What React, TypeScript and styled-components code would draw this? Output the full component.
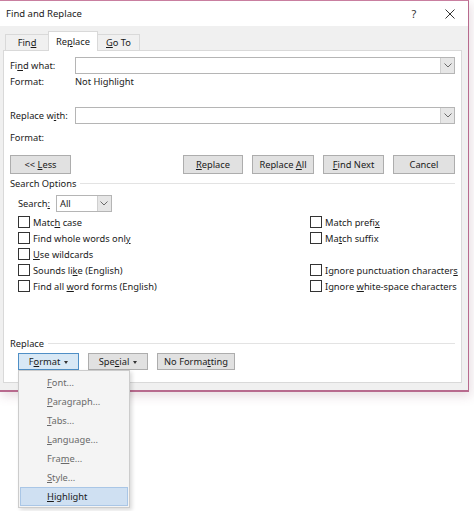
import React from "react";
import styled, { createGlobalStyle, css } from "styled-components";

const Global = createGlobalStyle`
  html, body { margin: 0; padding: 0; background: #ffffff; min-height: 511px; }
  body { font-family: "Noto Sans", "Open Sans", sans-serif; font-size: 9.3px; color: #1a1a1a; }
  * { box-sizing: border-box; }
`;

const Window = styled.div`
  position: relative;
  margin-left: -1px;
  width: 470px;
  height: 392px;
  background: #f0f0f0;
  border: 1px solid #c97fa0;
  border-bottom: 2px solid #b86a8e;
  border-right: 1px solid #b86a8e;
  box-shadow: 2px 4px 10px rgba(120, 60, 90, 0.18);
  display: flex;
  flex-direction: column;
`;

const TitleBar = styled.div`
  height: 25px;
  background: #ffffff;
  display: flex;
  align-items: center;
  padding-left: 6px;
  font-size: 9.5px;
`;

const Title = styled.div`
  flex: 1;
`;

const TitleButton = styled.div<{ $w: number }>`
  width: ${(p) => p.$w}px;
  display: flex;
  justify-content: center;
  font-size: 11px;
  color: #333;
`;

const TabStrip = styled.div`
  height: 24px;
  display: flex;
  align-items: flex-end;
  padding-left: 5px;
`;

const Tab = styled.div<{ $active?: boolean; $w: number }>`
  width: ${(p) => p.$w}px;
  height: 16px;
  border: 1px solid #d9d9d9;
  border-bottom: none;
  background: #f0f0f0;
  display: flex;
  align-items: center;
  justify-content: center;
  margin-right: -1px;
  ${(p) =>
    p.$active &&
    css`
      background: #ffffff;
      position: relative;
      z-index: 1;
      margin-bottom: -1px;
      height: 20px;
    `}
`;

const Panel = styled.div`
  margin-left: 3px;
  width: 459px;
  height: 333px;
  background: #ffffff;
  border: 1px solid #d9d9d9;
  padding: 6px 6px 0 6px;
  display: flex;
  flex-direction: column;
`;

const FieldRow = styled.div`
  height: 17px;
  display: flex;
  align-items: center;
`;

const FieldLabel = styled.div`
  width: 65px;
`;

const InfoRow = styled.div<{ $h: number; $mb?: number }>`
  height: ${(p) => p.$h}px;
  margin-bottom: ${(p) => p.$mb || 0}px;
  display: flex;
  align-items: center;
`;

const Combo = styled.div<{ $w?: number }>`
  ${(p) => (p.$w ? `width: ${p.$w}px;` : "flex: 1;")}
  height: 17px;
  border: 1px solid #b5b5b5;
  background: #fff;
  display: flex;
  align-items: stretch;
`;

const ComboText = styled.div`
  flex: 1;
  display: flex;
  align-items: center;
  padding-left: 3px;
`;

const ComboArrow = styled.div`
  width: 14px;
  background: #e6e6e6;
  border-left: 1px solid #cfcfcf;
  display: flex;
  align-items: center;
  justify-content: center;
`;

const ButtonRow = styled.div`
  height: 19px;
  margin-top: 5px;
  display: flex;
  gap: 9px;
`;

const Button = styled.div<{ $w: number; $primary?: boolean }>`
  width: ${(p) => p.$w}px;
  height: 100%;
  border: 1px solid #adadad;
  background: #e1e1e1;
  display: flex;
  align-items: center;
  justify-content: center;
  white-space: pre;
  ${(p) =>
    p.$primary &&
    css`
      background: #d8e8f5;
      border-color: #4f8fc6;
    `}
`;

const Spacer = styled.div`
  flex: 1;
`;

const GroupHeader = styled.div<{ $mt: number }>`
  margin-top: ${(p) => p.$mt}px;
  height: 14px;
  display: flex;
  align-items: center;
  gap: 4px;
  &::after {
    content: "";
    flex: 1;
    height: 1px;
    background: #e3e3e3;
  }
`;

const SearchRow = styled.div`
  margin-top: 5px;
  padding-left: 8px;
  height: 16px;
  display: flex;
  align-items: center;
  gap: 6px;
`;

const OptionGrid = styled.div`
  margin-top: 3px;
  padding-left: 8px;
  display: grid;
  grid-template-columns: 292px auto;
  grid-auto-rows: 16px;
`;

const Option = styled.label<{ $col: number; $row: number }>`
  grid-column: ${(p) => p.$col};
  grid-row: ${(p) => p.$row};
  display: flex;
  align-items: center;
  gap: 3px;
  white-space: nowrap;
`;

const Box = styled.span`
  width: 12px;
  height: 12px;
  border: 1px solid #333;
  background: #fff;
`;

const ReplaceButtons = styled.div`
  margin-top: 3px;
  height: 17px;
  padding-left: 8px;
  display: flex;
  gap: 9px;
`;

const MenuAnchor = styled.div`
  position: relative;
  width: 61px;
  height: 100%;
`;

const Menu = styled.div`
  position: absolute;
  left: 0;
  top: 17px;
  width: 112px;
  background: #f4f4f4;
  border: 1px solid #cccccc;
  box-shadow: 2px 2px 4px rgba(0, 0, 0, 0.15);
  padding: 2px 1px 1px 1px;
  z-index: 5;
`;

const MenuItem = styled.div<{ $active?: boolean }>`
  height: 19px;
  display: flex;
  align-items: center;
  padding-left: 27px;
  color: #6a6a6a;
  ${(p) =>
    p.$active &&
    css`
      background: #cfe0f2;
      border: 1px solid #a9c6e6;
      color: #1a1a1a;
      padding-left: 26px;
    `}
`;

const Caret = styled.span`
  display: inline-block;
  margin-left: 4px;
  width: 0;
  height: 0;
  border-left: 2.5px solid transparent;
  border-right: 2.5px solid transparent;
  border-top: 3px solid #333;
  vertical-align: middle;
`;

const Chevron = () => (
  <svg width="8" height="5" viewBox="0 0 8 5">
    <path d="M0.5 0.5 L4 4 L7.5 0.5" fill="none" stroke="#6a6a6a" strokeWidth="1" />
  </svg>
);

const K = styled.u`
  text-underline-offset: 1px;
`;

export default function App() {
  return (
    <>
      <Global />
      <Window>
        <TitleBar>
          <Title>Find and Replace</Title>
          <TitleButton $w={20}>?</TitleButton>
          <TitleButton $w={24} style={{ marginLeft: 14, marginRight: 6 }}>
            <svg width="10" height="10" viewBox="0 0 10 10">
              <path d="M0.5 0.5 L9.5 9.5 M9.5 0.5 L0.5 9.5" stroke="#333" strokeWidth="1" />
            </svg>
          </TitleButton>
        </TitleBar>
        <TabStrip>
          <Tab $w={44}>
            <span>
              Fin<K>d</K>
            </span>
          </Tab>
          <Tab $w={50} $active>
            <span>
              Re<K>p</K>lace
            </span>
          </Tab>
          <Tab $w={43}>
            <span>
              <K>G</K>o To
            </span>
          </Tab>
        </TabStrip>
        <Panel>
          <FieldRow>
            <FieldLabel>
              Fi<K>n</K>d what:
            </FieldLabel>
            <Combo>
              <ComboText />
              <ComboArrow>
                <Chevron />
              </ComboArrow>
            </Combo>
          </FieldRow>
          <InfoRow $h={15} $mb={18}>
            <FieldLabel>Format:</FieldLabel>
            <div>Not Highlight</div>
          </InfoRow>
          <FieldRow>
            <FieldLabel>
              Replace w<K>i</K>th:
            </FieldLabel>
            <Combo>
              <ComboText />
              <ComboArrow>
                <Chevron />
              </ComboArrow>
            </Combo>
          </FieldRow>
          <InfoRow $h={26}>
            <FieldLabel>Format:</FieldLabel>
          </InfoRow>
          <ButtonRow>
            <Button $w={61}>
              <span>
                &lt;&lt; <K>L</K>ess
              </span>
            </Button>
            <Spacer />
            <Button $w={60}>
              <span>
                <K>R</K>eplace
              </span>
            </Button>
            <Button $w={62}>
              <span>
                Replace <K>A</K>ll
              </span>
            </Button>
            <Button $w={61}>
              <span>
                <K>F</K>ind Next
              </span>
            </Button>
            <Button $w={62}>
              <span>Cancel</span>
            </Button>
          </ButtonRow>
          <GroupHeader $mt={2}>Search Options</GroupHeader>
          <SearchRow>
            <span>
              Search<K>:</K>
            </span>
            <Combo $w={56}>
              <ComboText>All</ComboText>
              <ComboArrow>
                <Chevron />
              </ComboArrow>
            </Combo>
          </SearchRow>
          <OptionGrid>
            <Option $col={1} $row={1}>
              <Box />
              <span>
                Matc<K>h</K> case
              </span>
            </Option>
            <Option $col={1} $row={2}>
              <Box />
              <span>
                Find whole words onl<K>y</K>
              </span>
            </Option>
            <Option $col={1} $row={3}>
              <Box />
              <span>
                <K>U</K>se wildcards
              </span>
            </Option>
            <Option $col={1} $row={4}>
              <Box />
              <span>
                Sounds li<K>k</K>e (English)
              </span>
            </Option>
            <Option $col={1} $row={5}>
              <Box />
              <span>
                Find all <K>w</K>ord forms (English)
              </span>
            </Option>
            <Option $col={2} $row={1}>
              <Box />
              <span>
                Match prefi<K>x</K>
              </span>
            </Option>
            <Option $col={2} $row={2}>
              <Box />
              <span>
                Ma<K>t</K>ch suffix
              </span>
            </Option>
            <Option $col={2} $row={4}>
              <Box />
              <span>
                Ignore punctuation character<K>s</K>
              </span>
            </Option>
            <Option $col={2} $row={5}>
              <Box />
              <span>
                Ignore <K>w</K>hite-space characters
              </span>
            </Option>
          </OptionGrid>
          <GroupHeader $mt={42}>Replace</GroupHeader>
          <ReplaceButtons>
            <MenuAnchor>
              <Button $w={61} $primary>
                <span>
                  F<K>o</K>rmat
                  <Caret />
                </span>
              </Button>
              <Menu>
                <MenuItem>
                  <span>
                    <K>F</K>ont...
                  </span>
                </MenuItem>
                <MenuItem>
                  <span>
                    <K>P</K>aragraph...
                  </span>
                </MenuItem>
                <MenuItem>
                  <span>
                    <K>T</K>abs...
                  </span>
                </MenuItem>
                <MenuItem>
                  <span>
                    <K>L</K>anguage...
                  </span>
                </MenuItem>
                <MenuItem>
                  <span>
                    Fra<K>m</K>e...
                  </span>
                </MenuItem>
                <MenuItem>
                  <span>
                    <K>S</K>tyle...
                  </span>
                </MenuItem>
                <MenuItem $active>
                  <span>
                    <K>H</K>ighlight
                  </span>
                </MenuItem>
              </Menu>
            </MenuAnchor>
            <Button $w={60}>
              <span>
                Spe<K>c</K>ial
                <Caret />
              </span>
            </Button>
            <Button $w={78}>
              <span>
                No Forma<K>t</K>ting
              </span>
            </Button>
          </ReplaceButtons>
        </Panel>
      </Window>
    </>
  );
}
